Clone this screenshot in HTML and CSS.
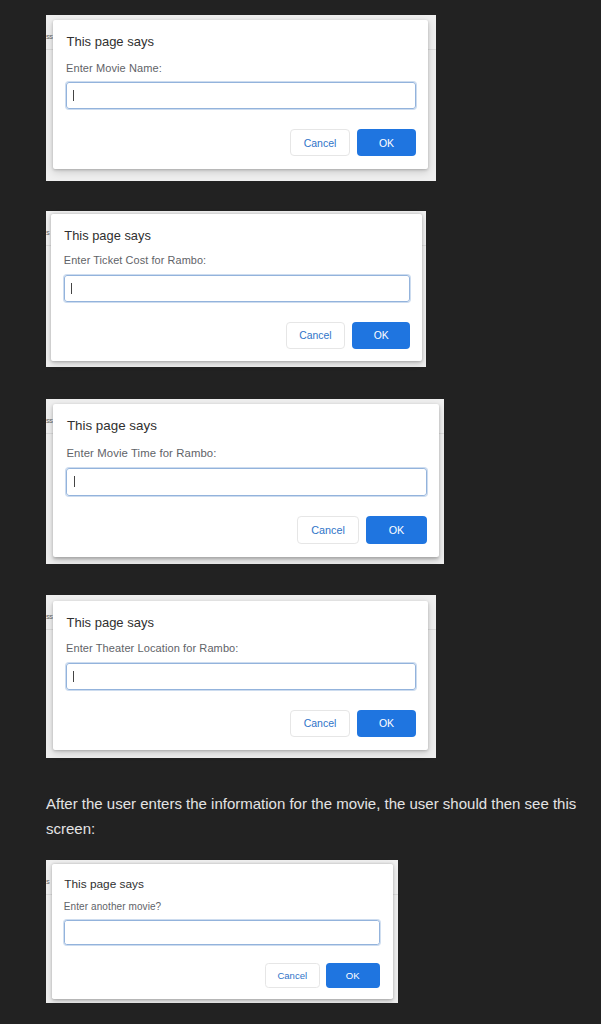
FILE: index.html
```html
<!DOCTYPE html>
<html lang="en">
<head>
<meta charset="utf-8">
<title>Movie prompts</title>
<link rel="stylesheet" href="styles.css">
</head>
<body>
<main class="page">
  <div class="shot shot-1">
    <span class="behind">ss</span>
    <div class="dialog">
      <div class="title">This page says</div>
      <div class="label">Enter Movie Name:</div>
      <div class="field"><span class="caret"></span></div>
      <div class="actions"><span class="btn cancel">Cancel</span><span class="btn ok">OK</span></div>
    </div>
  </div>

  <div class="shot shot-2">
    <span class="behind">s</span>
    <div class="dialog">
      <div class="title">This page says</div>
      <div class="label">Enter Ticket Cost for Rambo:</div>
      <div class="field"><span class="caret"></span></div>
      <div class="actions"><span class="btn cancel">Cancel</span><span class="btn ok">OK</span></div>
    </div>
  </div>

  <div class="shot shot-3">
    <span class="behind">ss</span>
    <div class="dialog">
      <div class="title">This page says</div>
      <div class="label">Enter Movie Time for Rambo:</div>
      <div class="field"><span class="caret"></span></div>
      <div class="actions"><span class="btn cancel">Cancel</span><span class="btn ok">OK</span></div>
    </div>
  </div>

  <div class="shot shot-4">
    <span class="behind">ss</span>
    <div class="dialog">
      <div class="title">This page says</div>
      <div class="label">Enter Theater Location for Rambo:</div>
      <div class="field"><span class="caret"></span></div>
      <div class="actions"><span class="btn cancel">Cancel</span><span class="btn ok">OK</span></div>
    </div>
  </div>

  <p class="note">After the user enters the information for the movie, the user should then see this screen:</p>

  <div class="shot shot-5">
    <span class="behind">s</span>
    <div class="dialog">
      <div class="title">This page says</div>
      <div class="label">Enter another movie?</div>
      <div class="field"></div>
      <div class="actions"><span class="btn cancel">Cancel</span><span class="btn ok">OK</span></div>
    </div>
  </div>
</main>
</body>
</html>
```

FILE: styles.css
```css
html, body {
  margin: 0;
  background: #222222;
}

body {
  font-family: "Liberation Sans", Arial, sans-serif;
}

.page {
  display: flex;
  flex-direction: column;
  align-items: flex-start;
  padding: 15px 0 0 46px;
}

.shot {
  position: relative;
  background: #efefef linear-gradient(#dcdcdc, #dcdcdc) 0 34px / 100% 1px no-repeat;
}

.behind {
  position: absolute;
  left: 0;
  top: 17px;
  font-size: 7.5px;
  letter-spacing: -0.6px;
  color: #6a6a6a;
}

.shot-1 { padding: 5px 8px 12px 7px; margin-bottom: 30px; }
.shot-2 { padding: 3px 4px 6px 5px; margin-bottom: 31.5px; }
.shot-3 { padding: 5px 5px 6.5px 7px; margin-bottom: 31px; }
.shot-4 { padding: 6px 8px 8px 7px; margin-bottom: 34.5px; }
.shot-5 { padding: 4px 5px 4px 6px; }

.shot-2 .dialog { zoom: 0.99; }
.shot-3 .dialog { zoom: 1.03; }
.shot-5 .dialog { zoom: 0.91; padding-right: 15px; }

.dialog {
  position: relative;
  z-index: 1;
  width: 375px;
  box-sizing: border-box;
  padding: 14px 12px 13px 13px;
  background: #ffffff;
  border-radius: 2px;
  box-shadow: 0 1px 3px rgba(0, 0, 0, 0.22), 0 3px 8px rgba(0, 0, 0, 0.14);
}

.title {
  font-size: 13px;
  line-height: 16px;
  color: #303030;
  padding-left: 0.5px;
}

.label {
  margin-top: 10.5px;
  font-size: 11px;
  line-height: 14px;
  color: #5f6368;
  letter-spacing: 0.1px;
}

.field {
  margin-top: 7.5px;
  height: 27px;
  box-sizing: border-box;
  border: 1px solid #93b3dc;
  box-shadow: 0 0 0 1px #cddcef;
  border-radius: 3px;
  display: flex;
  align-items: center;
  padding-left: 6px;
}

.caret {
  width: 1px;
  height: 11px;
  background: #444;
}

.actions {
  margin-top: 20px;
  display: flex;
  justify-content: flex-end;
  gap: 7px;
}

.btn {
  height: 27px;
  box-sizing: border-box;
  display: flex;
  align-items: center;
  justify-content: center;
  border-radius: 4px;
  font-size: 10.5px;
}

.cancel {
  width: 60px;
  border: 1px solid #e6e6e6;
  background: #ffffff;
  color: #2f74c8;
}

.ok {
  width: 59px;
  background: #1f75e0;
  color: #ffffff;
}

.note {
  margin: 0 0 18.5px;
  width: 550px;
  font-size: 15px;
  line-height: 24.5px;
  color: #e4e4e4;
}
```
